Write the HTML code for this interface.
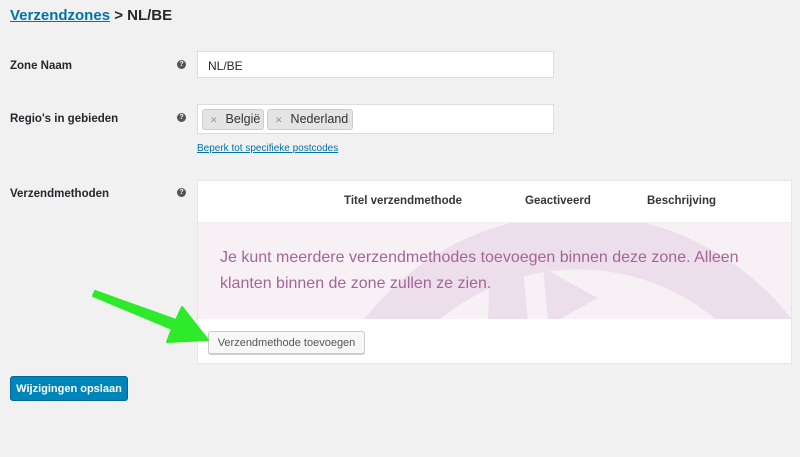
<!DOCTYPE html>
<html><head><meta charset="utf-8"><style>
*{box-sizing:border-box;margin:0;padding:0}
html,body{width:800px;height:457px;overflow:hidden}
body{background:#f1f1f1;font-family:"Liberation Sans",sans-serif;color:#23282d;position:relative}
.abs{position:absolute}
h1{position:absolute;left:10px;top:7px;font-size:15px;font-weight:bold;color:#23282d}
h1 a{color:#0073aa;text-decoration:underline}
.lbl{position:absolute;left:10px;font-size:11.5px;font-weight:bold;color:#23282d}
.help{position:absolute;left:177px;width:9px;height:9px;border-radius:50%;background:#555;color:#fff;font-size:7px;font-weight:bold;text-align:center;line-height:9px}
.inp{position:absolute;left:197px;width:357px;background:#fff;border:1px solid #ddd;font-size:12px}
.chip{position:absolute;top:4px;height:21px;background:#e4e4e4;border:1px solid #ccc;border-radius:3px;font-size:12.5px;line-height:19px;color:#333;white-space:nowrap}
.chip span{color:#999;font-size:9px;margin:0 8px 0 7px}
.btn{display:flex;align-items:center;justify-content:center}
</style></head><body>
<h1><a>Verzendzones</a> &gt; NL/BE</h1>
<div class="lbl" style="top:60px">Zone Naam</div>
<div class="help" style="top:60px">?</div>
<div class="inp" style="top:51px;height:27px;padding:7px 10px">NL/BE</div>
<div class="lbl" style="top:113px">Regio's in gebieden</div>
<div class="help" style="top:113px">?</div>
<div class="inp" style="top:104px;height:30px">
<div class="chip" style="left:4px;width:62px"><span>✕</span>België</div>
<div class="chip" style="left:69px;width:86px"><span>✕</span>Nederland</div>
</div>
<div class="abs" style="left:197px;top:143px;font-size:10px;color:#0073aa;text-decoration:underline">Beperk tot specifieke postcodes</div>
<div class="lbl" style="top:188px">Verzendmethoden</div>
<div class="help" style="top:188px">?</div>
<div class="abs" style="left:197px;top:180px;width:595px;height:184px;background:#fff;border:1px solid #e5e5e5">
<div class="abs" style="left:146px;top:14px;font-size:11.5px;font-weight:bold;color:#32373c">Titel verzendmethode</div>
<div class="abs" style="left:327px;top:14px;font-size:11.5px;font-weight:bold;color:#32373c">Geactiveerd</div>
<div class="abs" style="left:449px;top:14px;font-size:11.5px;font-weight:bold;color:#32373c">Beschrijving</div>
<div class="abs" style="left:0;top:41px;width:593px;height:97px;background:#f7f1f6;overflow:hidden;border-top:1px solid #eee">
<svg class="abs" style="left:0;top:0" width="593" height="97"><circle cx="380" cy="262" r="243" fill="none" stroke="#ecdfeb" stroke-width="55"/><path d="M290 97 L292 50 Q305 38 325 48 L330 97Z M350 97 L345 45 L400 75 L360 97 Z" fill="#ecdfeb"/></svg>
<div class="abs" style="left:22px;top:22px;width:560px;font-size:16px;line-height:26px;color:#a46497">Je kunt meerdere verzendmethodes toevoegen binnen deze zone. Alleen klanten binnen de zone zullen ze zien.</div>
</div>
<div class="abs btn" style="left:10px;top:150px;width:157px;height:23px;background:#f7f7f7;border:1px solid #ccc;border-radius:3px;box-shadow:0 1px 0 #ccc;font-size:11px;color:#555">Verzendmethode toevoegen</div>
</div>
<svg class="abs" style="left:0;top:0" width="800" height="457"><path d="M95 291 L176 320 L182 307 L208 340 L167 342 L172 329 L93 296 Z" fill="#2fe92b" stroke="#2fe92b" stroke-width="2" stroke-linejoin="round"/></svg>
<div class="abs btn" style="left:10px;top:376px;width:118px;height:25px;background:#0085ba;border:1px solid #006799;border-radius:3px;color:#fff;font-size:11px;font-weight:bold">Wijzigingen opslaan</div>
</body></html>
